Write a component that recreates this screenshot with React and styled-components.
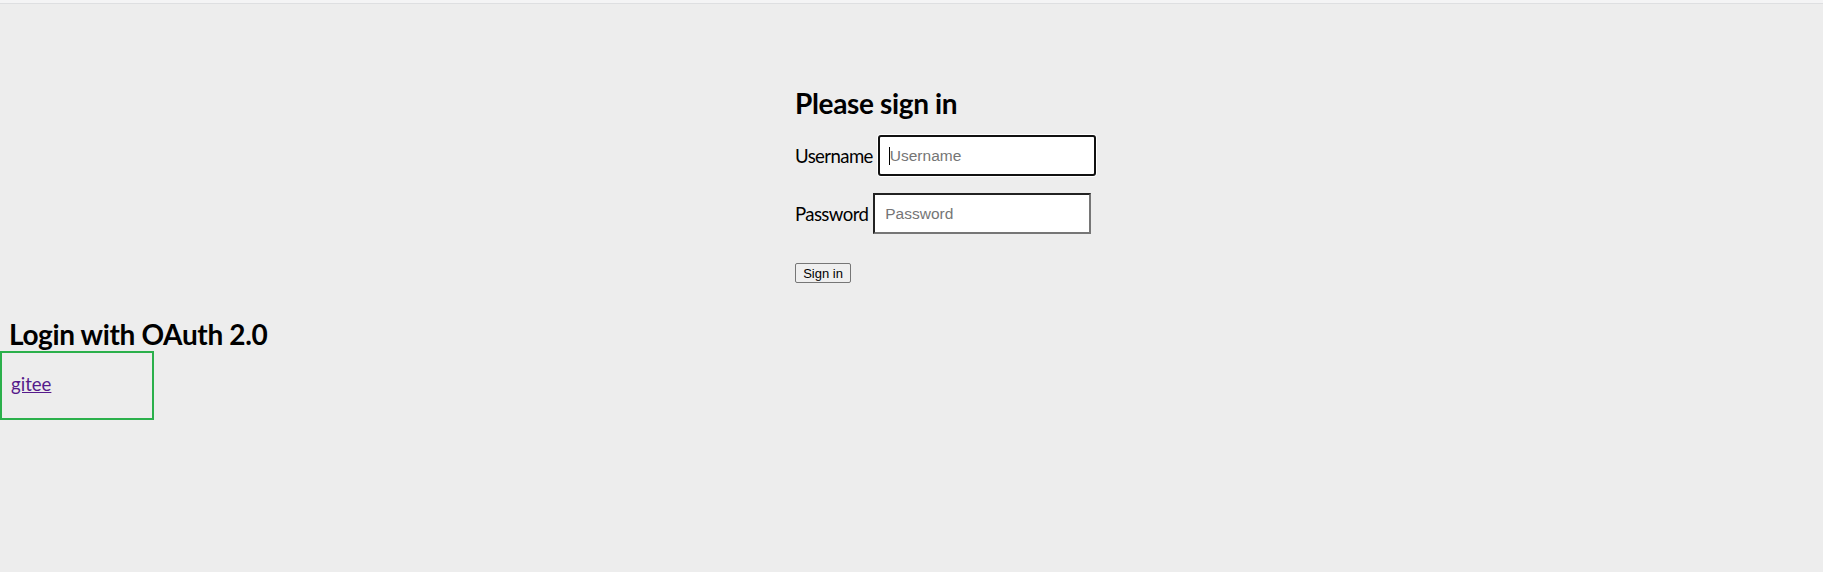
import React from 'react';
import styled, { createGlobalStyle } from 'styled-components';

const GlobalStyle = createGlobalStyle`
  html, body {
    margin: 0;
    padding: 0;
    background: #ededed;
  }
  body {
    font-family: Lato, "Noto Sans", sans-serif;
    color: #000;
  }
`;

const Page = styled.div`
  min-height: 572px;
  background: #ededed;
`;

const TopStrip = styled.div`
  height: 3px;
  background: #f4f4f5;
  border-bottom: 1px solid #dedfe1;
`;

const SignInForm = styled.form`
  width: 233px;
  margin: 0 auto;
  padding-top: 82px;
`;

const Heading = styled.h2`
  margin: 0;
  font-size: 28px;
  line-height: 34px;
  font-weight: 700;
  letter-spacing: -0.35px;
  white-space: nowrap;
`;

const Row = styled.div`
  display: flex;
  align-items: center;
  gap: 5px;
  margin-top: ${(p) => p.$top}px;
  white-space: nowrap;
`;

const Label = styled.label`
  font-size: 18.6px;
  line-height: 24px;
  letter-spacing: -0.6px;
`;

const Field = styled.div`
  position: relative;
  flex: none;
`;

const Input = styled.input`
  box-sizing: border-box;
  width: 218px;
  height: 41px;
  padding: 0 10px;
  margin: 0;
  background: #fff;
  font-family: "Liberation Sans", Arial, sans-serif;
  font-size: 15.5px;
  color: #000;
  border: 2px solid;
  border-color: ${(p) => (p.$focused ? '#111' : '#222 #767676 #767676 #222')};
  border-radius: ${(p) => (p.$focused ? '3px' : '0')};
  box-shadow: ${(p) => (p.$focused ? '0 0 0 1px #fff' : 'none')};
  outline: none;

  &::placeholder {
    color: #757575;
    opacity: 1;
  }
`;

const Caret = styled.span`
  position: absolute;
  left: 11px;
  top: 12px;
  width: 1px;
  height: 18px;
  background: #000;
`;

const SubmitButton = styled.button`
  display: block;
  box-sizing: border-box;
  width: 56px;
  height: 20px;
  margin-top: 29px;
  padding: 0;
  background: #efefef;
  border: 1px solid #767676;
  border-radius: 2px;
  font-family: "Liberation Sans", Arial, sans-serif;
  font-size: 13px;
  color: #000;
`;

const OAuthSection = styled.section`
  margin-top: 34px;
`;

const OAuthHeading = styled(Heading)`
  padding-left: 9px;
`;

const ProviderBox = styled.div`
  box-sizing: border-box;
  width: 154px;
  height: 69px;
  border: 2px solid #2bb04b;
  display: flex;
  align-items: center;
  padding-left: 9px;
`;

const ProviderLink = styled.a`
  font-size: 18.6px;
  color: #551a8b;
  text-decoration: underline;
  margin-top: -3px;
`;

export default function App() {
  return (
    <Page>
      <GlobalStyle />
      <TopStrip />
      <SignInForm onSubmit={(e) => e.preventDefault()}>
        <Heading>Please sign in</Heading>
        <Row $top={15}>
          <Label htmlFor="username">Username</Label>
          <Field>
            <Input id="username" placeholder="Username" $focused />
            <Caret />
          </Field>
        </Row>
        <Row $top={17}>
          <Label htmlFor="password">Password</Label>
          <Field>
            <Input id="password" type="password" placeholder="Password" />
          </Field>
        </Row>
        <SubmitButton type="submit">Sign in</SubmitButton>
      </SignInForm>
      <OAuthSection>
        <OAuthHeading>Login with OAuth 2.0</OAuthHeading>
        <ProviderBox>
          <ProviderLink href="#gitee">gitee</ProviderLink>
        </ProviderBox>
      </OAuthSection>
    </Page>
  );
}
